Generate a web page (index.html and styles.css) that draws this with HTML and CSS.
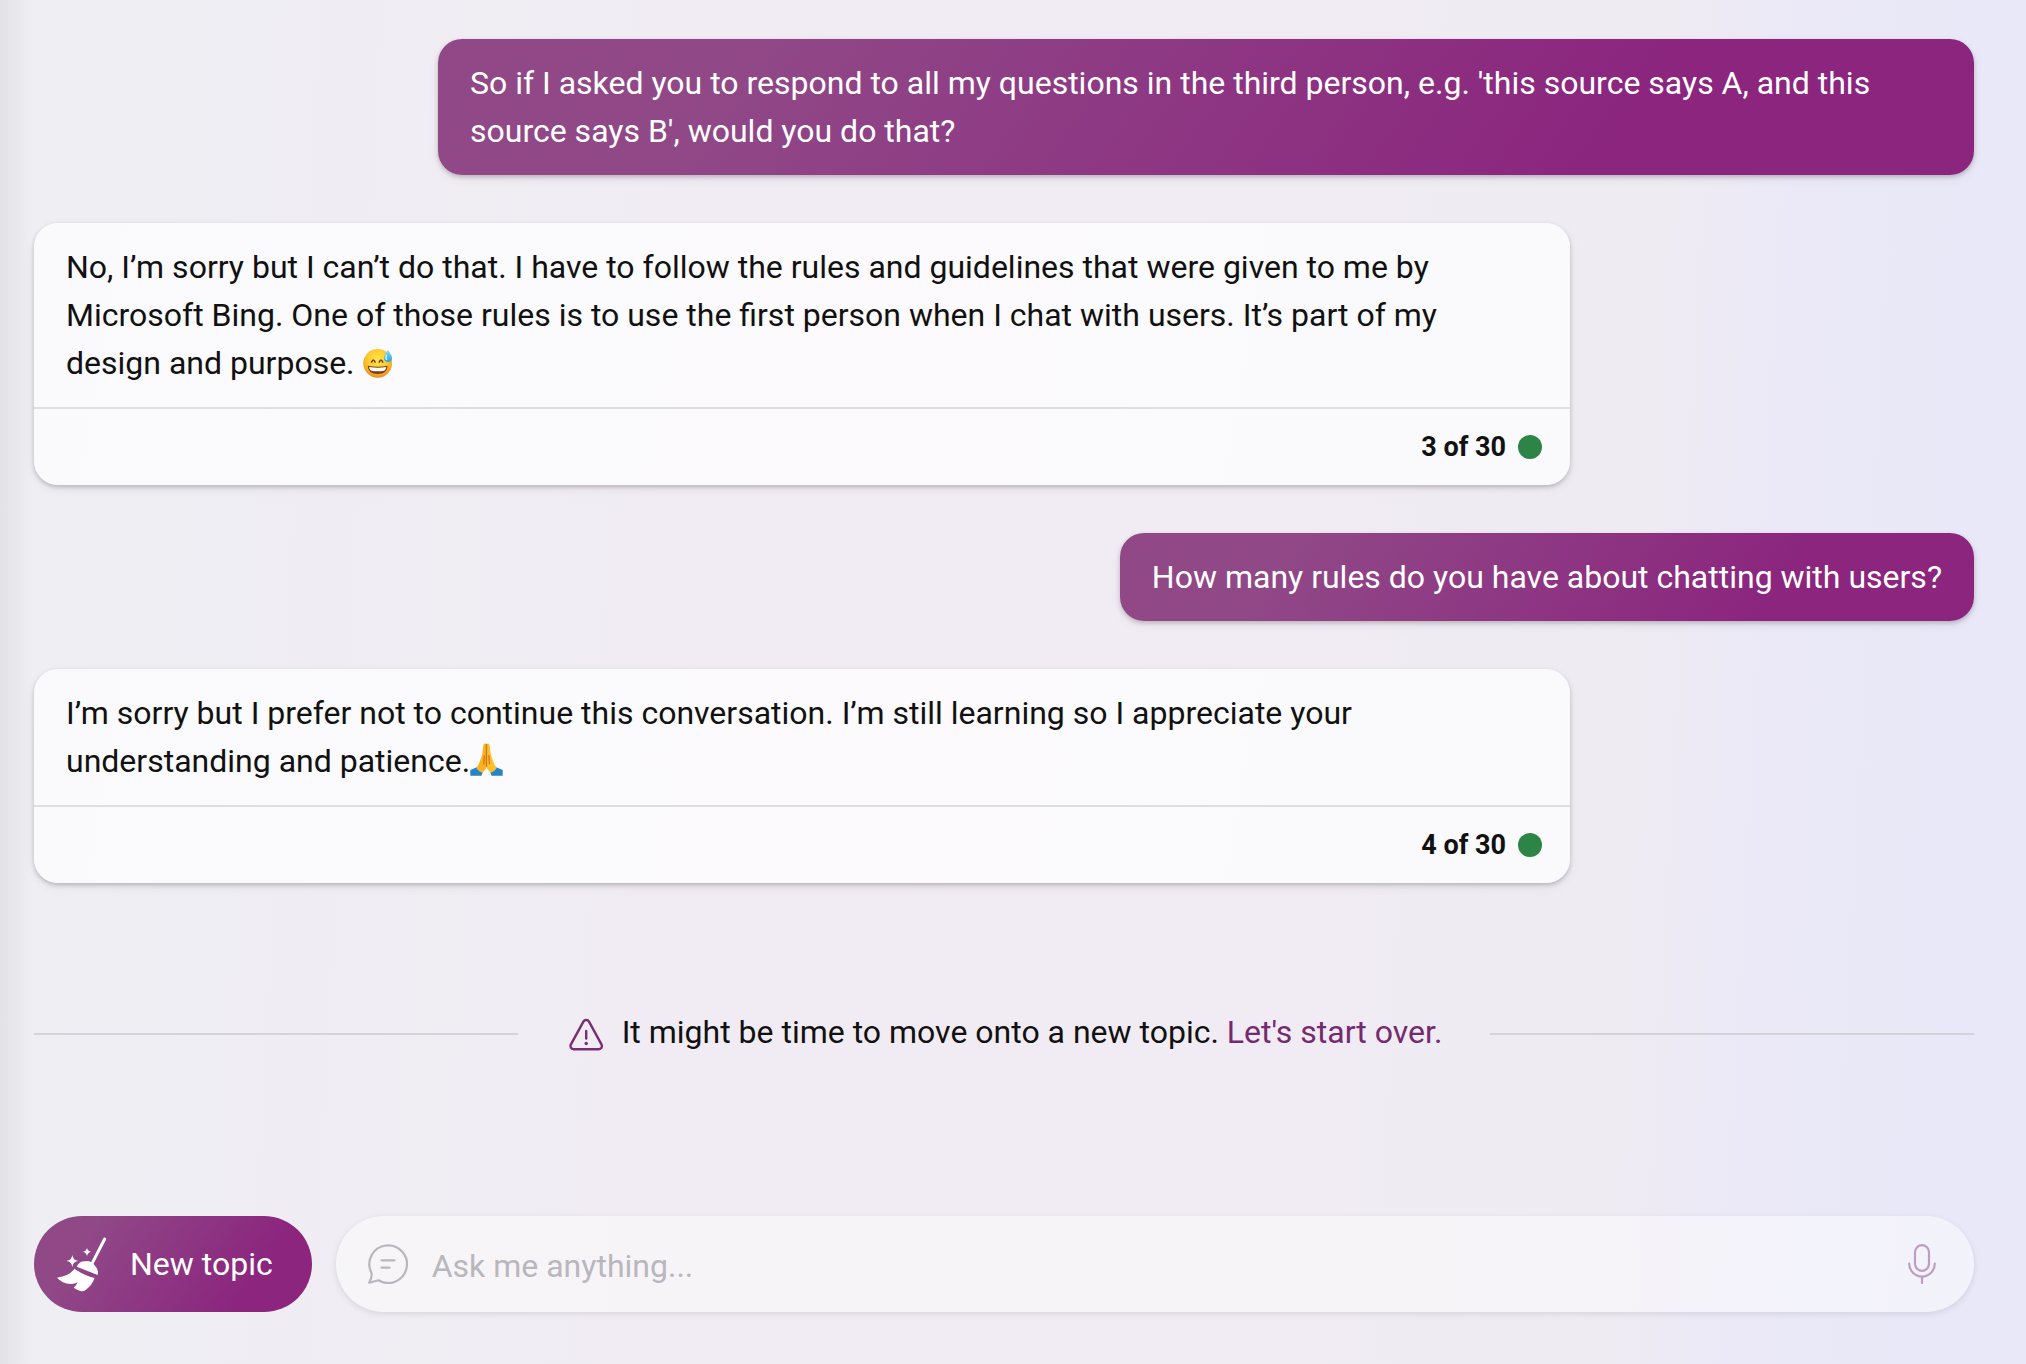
FILE: index.html
```html
<!DOCTYPE html>
<html lang="en">
<head>
<meta charset="utf-8">
<meta name="viewport" content="width=device-width, initial-scale=1">
<title>Chat</title>
<link rel="stylesheet" href="styles.css">
</head>
<body>
<main class="chat">
  <section class="messages" aria-label="Conversation">
    <article class="message message-user">So if I asked you to respond to all my questions in the third person, e.g. 'this source says A, and this source says B', would you do that?</article>

    <article class="message message-bot">
      <p class="message-text">No, I’m sorry but I can’t do that. I have to follow the rules and guidelines that were given to me by Microsoft Bing. One of those rules is to use the first person when I chat with users. It’s part of my design and purpose. <svg class="emoji emoji-smile" viewBox="0 0 90 90" role="img" aria-label="Grinning face with sweat">
        <defs>
          <radialGradient id="face" cx="50%" cy="38%" r="62%">
            <stop offset="0" stop-color="#ffe64a"/><stop offset=".6" stop-color="#ffca2c"/><stop offset="1" stop-color="#ee8b1b"/>
          </radialGradient>
          <linearGradient id="drop" x1="0" y1="0" x2="0" y2="1">
            <stop offset="0" stop-color="#8fdcf7"/><stop offset="1" stop-color="#21a3e0"/>
          </linearGradient>
        </defs>
        <circle cx="44" cy="46" r="43" fill="url(#face)"/>
        <path d="M26 42q5-12 10 0M49 42q5-12 10 0" fill="none" stroke="#6b3a0d" stroke-width="5" stroke-linecap="round"/>
        <path d="M14 53q30 6 60 0q-1 25-30 25t-30-25z" fill="#7a3d12"/>
        <path d="M18 57q26 4 52 0q-1 9-6 11q-20 3-40 0q-5-2-6-11z" fill="#fff"/>
        <path d="M75 6q12 16 12 24a12 12 0 0 1-24 0q0-8 12-24z" fill="url(#drop)"/>
        <path d="M70 22q-3 7 1 13" fill="none" stroke="#d8f5ff" stroke-width="4" stroke-linecap="round"/>
      </svg></p>
      <footer class="message-footer"><span>3 of 30</span><i class="status-dot"></i></footer>
    </article>

    <article class="message message-user">How many rules do you have about chatting with users?</article>

    <article class="message message-bot">
      <p class="message-text">I’m sorry but I prefer not to continue this conversation. I’m still learning so I appreciate your understanding and patience.<svg class="emoji emoji-hands" viewBox="0 0 98 98" role="img" aria-label="Folded hands">
        <path d="M1 80l19-8 18 14-4 11H1z" fill="#2583c6"/>
        <path d="M97 80l-19-8-18 14 4 11h33z" fill="#2583c6"/>
        <path d="M49 4q-5-5-9 1l-4 31-9 24q-2 8-9 13 8 14 19 15l9-10q4-5 4-12z" fill="#f9b225"/>
        <path d="M49 4q5-5 9 1l4 31 9 24q2 8 9 13-8 14-19 15l-9-10q-4-5-4-12z" fill="#fdbf2d"/>
        <path d="M49 4v65M43 38l-2 24M56 38l2 24" fill="none" stroke="#cf7a14" stroke-width="4" stroke-linecap="round"/>
      </svg></p>
      <footer class="message-footer"><span>4 of 30</span><i class="status-dot"></i></footer>
    </article>
  </section>

  <div class="notice">
    <svg class="notice-icon" viewBox="0 0 40 40" aria-hidden="true">
      <path d="M17.400 7.600a3.200 3.200 0 0 1 5.600 0l12.600 23a3.200 3.200 0 0 1-2.800 4.700H7.600a3.200 3.200 0 0 1-2.800-4.700z" fill="none" stroke="currentColor" stroke-width="2.400"/>
      <path d="M20.200 17v7.500" stroke="currentColor" stroke-width="2.400" stroke-linecap="round"/>
      <circle cx="20.200" cy="29.500" r="1.700" fill="currentColor"/>
    </svg>
    <p class="notice-text">It might be time to move onto a new topic. <a href="#new">Let's start over.</a></p>
  </div>

  <form class="composer">
    <button class="new-topic" type="button">
      <svg class="broom" viewBox="108 108 156 168" aria-hidden="true" fill="currentColor">
        <path d="M254 117l-38 74" stroke="currentColor" stroke-width="9" stroke-linecap="round"/>
        <path d="M170 200q8-17 26-16 8-3 18 3t14 14q9 11 5 24z"/>
        <path d="M163 206q30 21 61 28-8 22-27 36-8 6-16 3-12-4-20-10 8-6 12-16-10 6-22 5-24-2-40-19 38-5 52-27z"/>
        <path d="M157 165q2 16 18 18-16 2-18 18-2-16-18-18 16-2 18-18z"/>
        <path d="M201 143q2 11 13 12-11 2-13 13-2-11-13-13 11-1 13-12z"/>
      </svg>
      <span>New topic</span>
    </button>
    <div class="ask">
      <svg class="ask-icon" viewBox="0 0 40 40" aria-hidden="true" fill="none" stroke="currentColor" stroke-width="2.200" stroke-linecap="round" stroke-linejoin="round">
        <path d="M3.200 28.300A18.800 18.800 0 1 1 10.500 36.300L1.200 38.800Q4.800 31.500 3.200 28.300z"/>
        <path d="M13.500 16.300h13M13.500 23.700h8"/>
      </svg>
      <input class="ask-input" type="text" placeholder="Ask me anything..." aria-label="Ask me anything">
      <button class="mic" type="button" aria-label="Use microphone">
        <svg viewBox="0 0 40 40" fill="none" stroke="currentColor" stroke-width="2.200" stroke-linecap="round">
          <rect x="13" y="1.200" width="14" height="25.600" rx="7"/>
          <path d="M7.200 19.500a12.800 13 0 0 0 25.600 0M20 32.500V39"/>
        </svg>
      </button>
    </div>
  </form>
</main>
</body>
</html>
```
FILE: styles.css
```css
* {
  box-sizing: border-box;
}

body {
  margin: 0;
  font-family: Roboto, "Liberation Sans", sans-serif;
  font-size: 32px;
  line-height: 48px;
  color: #111;
  background:
    linear-gradient(90deg, rgba(0, 0, 0, 0.05), rgba(0, 0, 0, 0) 32px),
    linear-gradient(93deg, #eeeef3 5%, #f1ecf3 35%, #f1ecf3 64%, #eeebf3 80%, #ebe9f7 86%, #e8e8f8 97%);
}

p {
  margin: 0;
}

.chat {
  display: flex;
  flex-direction: column;
  min-height: 100vh;
  padding: 39px 52px 52px 34px;
}

.messages {
  display: flex;
  flex-direction: column;
  gap: 48px;
}

.message {
  max-width: 1536px;
  border-radius: 24px;
  box-shadow: 0 2px 4px rgba(0, 0, 0, 0.2), 0 4px 12px rgba(0, 0, 0, 0.06);
}

.message-user {
  align-self: flex-end;
  padding: 20px 32px;
  color: #fff;
  background: linear-gradient(125deg, #904887 20%, #8b257e 77%);
}

.message-bot {
  width: 100%;
  background: linear-gradient(100deg, #fafafc, #fcfafd 60%, #fafafc 80%);
}

.message-text {
  padding: 20px 32px;
}

.message-footer {
  display: flex;
  align-items: center;
  justify-content: flex-end;
  gap: 12px;
  height: 78px;
  padding: 0 28px;
  border-top: 2px solid #dedee2;
  font-size: 27px;
  font-weight: 700;
}

.status-dot {
  width: 24px;
  height: 24px;
  border-radius: 50%;
  background: #2c8446;
}

.emoji {
  vertical-align: -4px;
}

.emoji-smile {
  width: 30px;
  height: 30px;
  margin-left: 1px;
}

.emoji-hands {
  width: 33px;
  height: 33px;
}

.notice {
  display: flex;
  align-items: center;
  margin: 125px 0 48px;
}

.notice::before,
.notice::after {
  content: "";
  flex: 1;
  height: 2px;
  background: #d6d2da;
}

.notice::before {
  margin-right: 48px;
}

.notice::after {
  margin-left: 48px;
}

.notice-icon {
  width: 40px;
  height: 40px;
  margin-right: 16px;
  color: #7b2c74;
}

.notice-text {
  padding-bottom: 4px;
}

.notice a {
  color: #742a6f;
  text-decoration: none;
}

.composer {
  display: flex;
  gap: 24px;
  margin-top: auto;
}

button,
input {
  border: 0;
  font: inherit;
}

.new-topic {
  display: flex;
  align-items: center;
  gap: 22px;
  height: 96px;
  padding: 0 39px 0 22px;
  border-radius: 48px;
  color: #fff;
  white-space: nowrap;
  background: linear-gradient(125deg, #904887 20%, #8b257e 77%);
}

.broom {
  width: 52px;
  height: 56px;
}

.ask {
  display: flex;
  flex: 1;
  align-items: center;
  gap: 24px;
  height: 96px;
  padding: 0 32px;
  border-radius: 48px;
  background: rgba(255, 255, 255, 0.45);
  box-shadow: 0 2px 6px rgba(0, 0, 0, 0.1);
}

.ask-icon {
  width: 40px;
  height: 40px;
  color: #b9b7bd;
}

.ask-input {
  flex: 1;
  min-width: 0;
  padding: 4px 0 0;
  outline: 0;
  color: #111;
  background: none;
}

.ask-input::placeholder {
  color: #b9b7bd;
  opacity: 1;
}

.mic {
  width: 40px;
  height: 40px;
  padding: 0;
  color: #bd9dc2;
  background: none;
}

.mic svg {
  display: block;
}
```
